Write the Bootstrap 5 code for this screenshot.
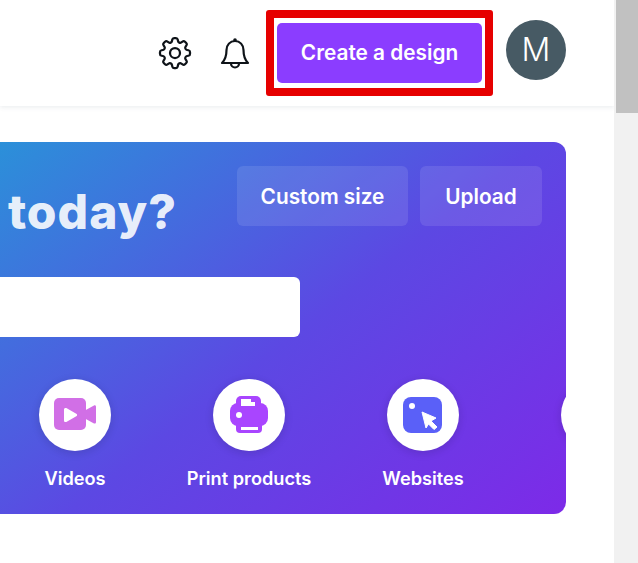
<!DOCTYPE html>
<html lang="en">
<head>
  <meta charset="UTF-8">
  <title>Create a design</title>
  <link href="https://cdn.jsdelivr.net/npm/bootstrap@5.3.0/dist/css/bootstrap.min.css" rel="stylesheet">
  <style>
    html, body { height: 563px; overflow: hidden; }
    body { font-family: Inter, "Liberation Sans", sans-serif; background: #fff; }
    .page-main { width: 614px; }
    .top-bar { height: 106px; padding: 9px 48px 10px 0; box-shadow: 0 1px 5px rgba(64, 87, 109, .12); }
    .bar-icon { color: #0e1318; }
    .bell-icon { margin: 0 16px 0 25px; }
    .red-box { border: 8px solid #e60000; border-radius: 3px; padding: 5px 3px; margin-right: 13px; }
    .create-btn { width: 205px; height: 60px; background: #8b3dff; color: #fff; border: 0; border-radius: 5px; font-size: 20.8px; font-weight: 600; padding: 1px 0 0; }
    .avatar { width: 60px; height: 60px; background: #475a64; color: #fff; font-size: 32px; font-weight: 300; margin-bottom: 5px; }
    .hero { height: 372px; margin: 36px 48px 0 0; padding-top: 24px; border-radius: 0 12px 12px 0; color: #fff;
      background: linear-gradient(142deg, #2b90d9 0%, #5c48e3 52%, #7d2ae8 100%); }
    .hero-title { margin: 18px 0 0 8px; font-size: 48px; font-weight: 800; letter-spacing: 1px; line-height: 55px; color: rgba(255, 255, 255, .9); }
    .hero-actions { gap: 12px; margin-right: 24px; }
    .hero-btn { height: 60px; background: rgba(255, 255, 255, .1); color: #fff; border: 0; border-radius: 6px; font-size: 20.8px; font-weight: 600; padding: 2px 0 0; }
    .hero-btn.wide { width: 171px; }
    .hero-btn.narrow { width: 122px; }
    .search-box { width: 300px; height: 60px; margin-top: 38px; background: #fff; border-radius: 0 6px 6px 0; }
    .shortcut-row { margin: 42px 0 0 -12px; }
    .shortcut { flex: 0 0 174px; }
    .shortcut-dot { width: 72px; height: 72px; background: #fff; box-shadow: 0 2px 8px rgba(14, 19, 24, .15); }
    .shortcut-label { margin-top: 16px; font-size: 18.2px; font-weight: 600; line-height: 22px; white-space: nowrap; }
    .fake-scroll { width: 24px; height: 563px; background: #f1f1f1; padding-left: 2px; }
    .fake-thumb { height: 113px; background: #c1c1c1; }
  </style>
</head>
<body class="d-flex">
  <div class="page-main flex-shrink-0">
    <header class="top-bar d-flex justify-content-end align-items-center bg-white">
      <svg class="bar-icon" width="40" height="40" viewBox="0 0 24 24" fill="none" stroke="currentColor" stroke-width="1.35" stroke-linejoin="round">
        <path d="M10.343 3.94c.09-.542.56-.94 1.11-.94h1.093c.55 0 1.02.398 1.11.94l.149.894c.07.424.384.764.78.93.398.164.855.142 1.205-.108l.737-.527a1.125 1.125 0 011.45.12l.773.774c.39.389.44 1.002.12 1.45l-.527.737c-.25.35-.272.806-.107 1.204.165.397.505.71.93.78l.893.15c.543.09.94.56.94 1.109v1.094c0 .55-.397 1.02-.94 1.11l-.893.149c-.425.07-.765.383-.93.78-.165.398-.143.854.107 1.204l.527.738c.32.447.269 1.06-.12 1.45l-.774.773a1.125 1.125 0 01-1.449.12l-.738-.527c-.35-.25-.806-.272-1.203-.107-.397.165-.71.505-.781.929l-.149.894c-.09.542-.56.94-1.11.94h-1.094c-.55 0-1.019-.398-1.11-.94l-.148-.894c-.071-.424-.384-.764-.781-.93-.398-.164-.854-.142-1.204.108l-.738.527c-.447.32-1.06.269-1.45-.12l-.773-.774a1.125 1.125 0 01-.12-1.45l.527-.737c.25-.35.273-.806.108-1.204-.165-.397-.505-.71-.93-.78l-.894-.15c-.542-.09-.94-.56-.94-1.109v-1.094c0-.55.398-1.02.94-1.11l.894-.149c.424-.07.765-.383.93-.78.165-.398.143-.854-.107-1.204l-.527-.738a1.125 1.125 0 01.12-1.45l.773-.773a1.125 1.125 0 011.45-.12l.737.527c.35.25.807.272 1.204.107.397-.165.71-.505.78-.929l.15-.894z"/>
        <circle cx="12" cy="12" r="3"/>
      </svg>
      <svg class="bar-icon bell-icon" width="30" height="32" viewBox="0 0 30 32" fill="none" stroke="currentColor" stroke-width="2.2" stroke-linecap="round" stroke-linejoin="round">
        <circle cx="15" cy="3" r="1.8" fill="currentColor" stroke="none"/>
        <path d="M2 26H28C25 23 23.500 20 23.500 13C23.500 8 20 4 15 4C10 4 6.500 8 6.500 13C6.500 20 5 23 2 26Z"/>
        <path d="M11 26.500a4 4 0 0 0 8 0"/>
      </svg>
      <div class="red-box bg-white">
        <button type="button" class="btn create-btn d-block">Create a design</button>
      </div>
      <div class="avatar rounded-circle d-flex justify-content-center align-items-center">M</div>
    </header>

    <section class="hero overflow-hidden">
      <div class="d-flex justify-content-between align-items-start">
        <div class="hero-title">today?</div>
        <div class="hero-actions d-flex">
          <button type="button" class="btn hero-btn wide">Custom size</button>
          <button type="button" class="btn hero-btn narrow">Upload</button>
        </div>
      </div>
      <div class="search-box"></div>
      <div class="shortcut-row d-flex">
        <div class="shortcut d-flex flex-column align-items-center">
          <div class="shortcut-dot rounded-circle d-flex justify-content-center align-items-center">
            <svg width="48" height="48" viewBox="0 0 48 48">
              <rect x="3" y="7" width="32" height="32" rx="5" fill="#d16fe6"/>
              <path d="M33 20L43 14.500C44 14 45 14.600 45 15.800V31C45 32.300 44 32.900 43 32.400L33 27Z" fill="#d16fe6"/>
              <path d="M13 18.500C13 17.200 14.200 16.500 15.300 17.100L25.300 22.700C26.400 23.300 26.400 24.700 25.300 25.300L15.300 30.900C14.200 31.500 13 30.800 13 29.500Z" fill="#fff"/>
            </svg>
          </div>
          <div class="shortcut-label">Videos</div>
        </div>
        <div class="shortcut d-flex flex-column align-items-center">
          <div class="shortcut-dot rounded-circle d-flex justify-content-center align-items-center">
            <svg width="48" height="48" viewBox="0 0 48 48">
              <rect x="11" y="5" width="25" height="14" rx="5" fill="#a945ff"/>
              <rect x="5" y="12" width="38" height="23" rx="8" fill="#a945ff"/>
              <rect x="11" y="28" width="26" height="14" rx="4" fill="#a945ff"/>
              <path d="M16 8H26V11H30V15H16Z" fill="#fff"/>
              <circle cx="14" cy="24" r="3" fill="#fff"/>
              <rect x="16" y="36" width="17" height="3" fill="#fff"/>
            </svg>
          </div>
          <div class="shortcut-label">Print products</div>
        </div>
        <div class="shortcut d-flex flex-column align-items-center">
          <div class="shortcut-dot rounded-circle d-flex justify-content-center align-items-center">
            <svg width="48" height="48" viewBox="0 0 48 48">
              <rect x="4" y="6" width="39" height="36" rx="8" fill="#5a60f8"/>
              <circle cx="13" cy="15" r="3" fill="#fff"/>
              <path d="M23 21L37 27L32 30L38 36L35 38.500L29.500 33L27 37Z" fill="#fff" stroke="#fff" stroke-linejoin="round"/>
            </svg>
          </div>
          <div class="shortcut-label">Websites</div>
        </div>
        <div class="shortcut d-flex flex-column align-items-center">
          <div class="shortcut-dot rounded-circle flex-shrink-0"></div>
        </div>
      </div>
    </section>
  </div>
  <div class="fake-scroll flex-shrink-0">
    <div class="fake-thumb"></div>
  </div>
</body>
</html>
